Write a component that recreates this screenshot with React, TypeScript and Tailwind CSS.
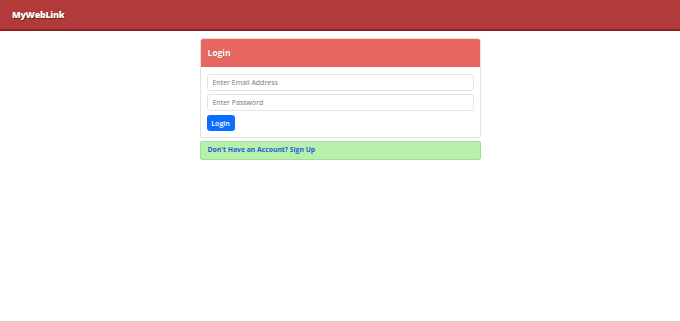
export default function App() {
  return (
    <div className="w-[680px] h-[322px] bg-white flex flex-col border-b border-[#d0d0d0]" style={{ fontFamily: '"Open Sans", "Noto Sans", sans-serif' }}>
      <div className="h-[31px] bg-[#b33a3a] border-b-2 border-[#8e2020] flex items-center pl-[12px]">
        <span className="text-white font-extrabold text-[9px] tracking-[-0.3px] [text-shadow:1px_1px_1px_rgba(0,0,0,0.45)]">MyWebLink</span>
      </div>
      <div className="flex flex-col items-center pt-[7px]">
        <div className="w-[281px] border border-[#e2e2e2] rounded-[3px] overflow-hidden">
          <div className="h-[28px] bg-[#e86660] flex items-center pl-[7px]">
            <span className="text-white font-bold text-[8.5px] [text-shadow:0_0_1px_rgba(0,0,0,0.25)]">Login</span>
          </div>
          <div className="px-[6px] pt-[7px] pb-[6px] flex flex-col gap-[3px]">
            <input className="h-[17px] w-full border border-[#e4e4e4] rounded-[3px] px-[5px] text-[7px] outline-none placeholder:text-[#777]" placeholder="Enter Email Address" />
            <input className="h-[17px] w-full border border-[#e4e4e4] rounded-[3px] px-[5px] text-[7px] outline-none placeholder:text-[#777]" placeholder="Enter Password" />
            <div className="flex pt-[1px]">
              <button className="h-[16px] w-[28px] bg-[#0d6efd] rounded-[3px] text-white text-[7px] font-semibold leading-none">Login</button>
            </div>
          </div>
        </div>
        <div className="w-[281px] mt-[3px] h-[19px] bg-[#b7f0aa] border border-[#a3dc97] rounded-[2px] flex items-center pl-[7px]">
          <span className="text-[#1f5fd6] font-bold text-[6.8px]">Don't Have an Account? Sign Up</span>
        </div>
      </div>
    </div>
  );
}
